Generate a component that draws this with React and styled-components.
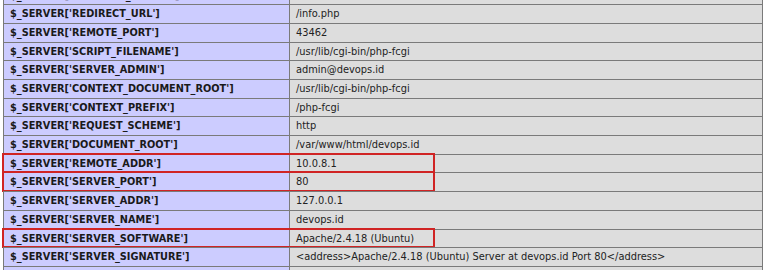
import React from "react";
import styled, { createGlobalStyle } from "styled-components";

const Global = createGlobalStyle`
  html, body { margin: 0; padding: 0; background: #ffffff; }
  body { font-family: "DejaVu Sans", "Liberation Sans", sans-serif; overflow: hidden; }
`;

const Page = styled.div`
  width: 768px;
  height: 270px;
  overflow: hidden;
  padding-left: 3px;
  box-sizing: border-box;
`;

const Table = styled.div`
  width: 760px;
  margin-top: -14.4px;
  border-right: 1px solid #7a7a7a;
  border-bottom: 1px solid #7a7a7a;
  box-sizing: border-box;
`;

const Row = styled.div`
  position: relative;
  display: grid;
  grid-template-columns: 286px 1fr;
  height: 18.7px;
`;

const Cell = styled.div`
  box-sizing: border-box;
  border-top: 1px solid #7a7a7a;
  border-left: 1px solid #7a7a7a;
  background: ${(p) => (p.$key ? "#ccccff" : "#dddddd")};
  font-weight: ${(p) => (p.$key ? "bold" : "normal")};
  color: ${(p) => (p.$key ? "#1a1a1a" : "#222222")};
  font-size: ${(p) => (p.$key ? "9.75px" : "9.85px")};
  line-height: 17px;
  padding: 0 0 0 6px;
  white-space: nowrap;
  overflow: hidden;
`;

const Highlight = styled.div`
  position: absolute;
  left: -1px;
  top: -1px;
  bottom: -1px;
  width: 433px;
  border: 2px solid #d02424;
  box-sizing: border-box;
  pointer-events: none;
`;

const rows = [
  ["REDIRECT_STATUS", "200"],
  ["REDIRECT_URL", "/info.php"],
  ["REMOTE_PORT", "43462"],
  ["SCRIPT_FILENAME", "/usr/lib/cgi-bin/php-fcgi"],
  ["SERVER_ADMIN", "admin@devops.id"],
  ["CONTEXT_DOCUMENT_ROOT", "/usr/lib/cgi-bin/php-fcgi"],
  ["CONTEXT_PREFIX", "/php-fcgi"],
  ["REQUEST_SCHEME", "http"],
  ["DOCUMENT_ROOT", "/var/www/html/devops.id"],
  ["REMOTE_ADDR", "10.0.8.1", true],
  ["SERVER_PORT", "80", true],
  ["SERVER_ADDR", "127.0.0.1"],
  ["SERVER_NAME", "devops.id"],
  ["SERVER_SOFTWARE", "Apache/2.4.18 (Ubuntu)", true],
  ["SERVER_SIGNATURE", "<address>Apache/2.4.18 (Ubuntu) Server at devops.id Port 80</address>"],
  ["PATH", "/usr/local/sbin:/usr/local/bin:/usr/sbin:/usr/bin:/sbin:/bin"],
];

export default function App() {
  return (
    <>
      <Global />
      <Page>
        <Table>
          {rows.map(([k, v, hl]) => (
            <Row key={k}>
              <Cell $key>{`$_SERVER['${k}']`}</Cell>
              <Cell>{v}</Cell>
              {hl && <Highlight />}
            </Row>
          ))}
        </Table>
      </Page>
    </>
  );
}
